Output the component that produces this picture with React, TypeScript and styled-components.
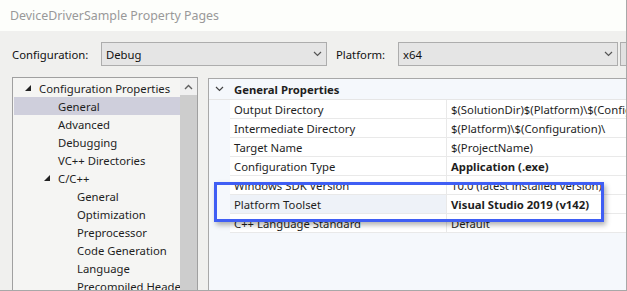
import styled, { createGlobalStyle } from "styled-components";

const GlobalStyle = createGlobalStyle`
  html, body {
    margin: 0;
    padding: 0;
    background: #f0f0ee;
  }
  body {
    font-family: "Noto Sans", "Open Sans", sans-serif;
    font-size: 11.3px;
    color: #1e1e1e;
  }
`;

const Window = styled.div`
  position: relative;
  width: 626px;
  height: 290px;
  border-right: 1px solid #a8a8a8;
  border-bottom: 1px solid #a8a8a8;
  background: #f0f0ee;
  overflow: hidden;
  display: flex;
  flex-direction: column;
`;

const TitleBar = styled.div`
  height: 31px;
  flex-shrink: 0;
  background: #fdfefb;
  color: #999;
  font-size: 12.4px;
  display: flex;
  align-items: center;
  padding-left: 10px;
`;

const Body = styled.div`
  flex: 1;
  padding: 11px 0 0 12px;
  display: flex;
  flex-direction: column;
  min-height: 0;
`;

const ConfigRow = styled.div`
  display: flex;
  align-items: center;
  height: 24px;
`;

const Label = styled.span<{ $w: number; $indent?: number }>`
  width: ${(p) => p.$w}px;
  padding-left: ${(p) => p.$indent ?? 0}px;
  box-sizing: border-box;
  flex-shrink: 0;
  color: #111;
`;

const Combo = styled.div<{ $w: number }>`
  width: ${(p) => p.$w}px;
  height: 24px;
  box-sizing: border-box;
  flex-shrink: 0;
  background: #e5e5e5;
  border: 1px solid #adadad;
  display: flex;
  align-items: center;
  justify-content: space-between;
  padding: 0 4px 0 4px;
  color: #111;
`;

const StubButton = styled.div`
  width: 20px;
  height: 24px;
  box-sizing: border-box;
  margin-left: 2px;
  background: #e1e1e1;
  border: 1px solid #adadad;
  flex-shrink: 0;
`;

const Panels = styled.div`
  display: flex;
  flex: 1;
  margin-top: 11px;
  min-height: 0;
`;

const TreePanel = styled.div`
  width: 186px;
  flex-shrink: 0;
  box-sizing: border-box;
  border: 1px solid #a0a0a0;
  border-bottom: none;
  background: #f5f5f3;
  display: flex;
  overflow: hidden;
`;

const TreeList = styled.div`
  flex: 1;
  min-width: 0;
  overflow: hidden;
  padding: 1px 0 0 1px;
`;

const TreeRow = styled.div<{ $level: number; $selected?: boolean }>`
  height: 18px;
  display: flex;
  align-items: center;
  white-space: nowrap;
  overflow: hidden;
  padding-left: ${(p) => 11 + (p.$level - 1) * 19}px;
  background: ${(p) => (p.$selected ? "#cfcfdc" : "transparent")};
`;

const Expander = styled.span`
  width: 14px;
  flex-shrink: 0;
  display: flex;
  align-items: center;
`;

const Scrollbar = styled.div`
  width: 17px;
  flex-shrink: 0;
  display: flex;
  flex-direction: column;
  background: #f0f0f0;
`;

const ScrollArrow = styled.div`
  height: 17px;
  display: flex;
  align-items: center;
  justify-content: center;
  background: #f0f0f0;
`;

const ScrollThumb = styled.div`
  flex: 1;
  background: #cdcdcd;
`;

const GridPanel = styled.div`
  margin-left: 10px;
  margin-top: 1px;
  flex: 1;
  border: 1px solid #a8a8a8;
  border-bottom: none;
  border-right: none;
  background: #f5f8fc;
  overflow: hidden;
`;

const GroupHeader = styled.div`
  height: 20px;
  display: flex;
  align-items: center;
  font-weight: 700;
  border-bottom: 1px solid #e6e6e6;
`;

const GroupChevron = styled.span`
  width: 25px;
  padding-left: 6px;
  box-sizing: border-box;
  display: flex;
  align-items: center;
`;

const PropRow = styled.div`
  height: 19px;
  display: flex;
  margin-left: 21px;
  box-sizing: border-box;
  border-bottom: 1px solid #e9e9e9;
`;

const NameCell = styled.div<{ $selected?: boolean }>`
  width: 217px;
  flex-shrink: 0;
  box-sizing: border-box;
  padding-left: 4px;
  display: flex;
  align-items: center;
  white-space: nowrap;
  overflow: hidden;
  border-right: 1px solid #e9e9e9;
  background: ${(p) => (p.$selected ? "#eef2f8" : "#ffffff")};
`;

const ValueCell = styled.div<{ $bold?: boolean }>`
  flex: 1;
  padding-left: 4px;
  display: flex;
  align-items: center;
  white-space: nowrap;
  overflow: hidden;
  background: #ffffff;
  font-weight: ${(p) => (p.$bold ? 700 : 400)};
`;

const Highlight = styled.div`
  position: absolute;
  left: 214px;
  top: 182px;
  width: 390px;
  height: 40px;
  box-sizing: border-box;
  border: 3px solid #3f5ef4;
  box-shadow: 2px 3px 5px rgba(0, 0, 0, 0.3);
  pointer-events: none;
`;

const Chevron = ({ color = "#555" }: { color?: string }) => (
  <svg width="9" height="6" viewBox="0 0 9 6">
    <path d="M1 1 L4.5 4.5 L8 1" fill="none" stroke={color} strokeWidth="1.2" />
  </svg>
);

const UpChevron = () => (
  <svg width="9" height="6" viewBox="0 0 9 6">
    <path d="M1 5 L4.5 1.5 L8 5" fill="none" stroke="#606060" strokeWidth="1.4" />
  </svg>
);

const Triangle = () => (
  <svg width="6" height="6" viewBox="0 0 6 6">
    <path d="M6 0 L6 6 L0 6 Z" fill="#222" />
  </svg>
);

const tree = [
  { label: "Configuration Properties", level: 1, expanded: true },
  { label: "General", level: 2, selected: true },
  { label: "Advanced", level: 2 },
  { label: "Debugging", level: 2 },
  { label: "VC++ Directories", level: 2 },
  { label: "C/C++", level: 2, expanded: true },
  { label: "General", level: 3 },
  { label: "Optimization", level: 3 },
  { label: "Preprocessor", level: 3 },
  { label: "Code Generation", level: 3 },
  { label: "Language", level: 3 },
  { label: "Precompiled Headers", level: 3 },
];

const props = [
  { name: "Output Directory", value: "$(SolutionDir)$(Platform)\\$(Configuration)\\" },
  { name: "Intermediate Directory", value: "$(Platform)\\$(Configuration)\\" },
  { name: "Target Name", value: "$(ProjectName)" },
  { name: "Configuration Type", value: "Application (.exe)", bold: true },
  { name: "Windows SDK Version", value: "10.0 (latest installed version)" },
  { name: "Platform Toolset", value: "Visual Studio 2019 (v142)", bold: true, selected: true },
  { name: "C++ Language Standard", value: "Default" },
];

export default function App() {
  return (
    <>
      <GlobalStyle />
      <Window>
        <TitleBar>DeviceDriverSample Property Pages</TitleBar>
        <Body>
          <ConfigRow>
            <Label $w={89}>Configuration:</Label>
            <Combo $w={226}>
              <span>Debug</span>
              <Chevron />
            </Combo>
            <Label $w={71} $indent={9}>Platform:</Label>
            <Combo $w={220}>
              <span>x64</span>
              <Chevron />
            </Combo>
            <StubButton />
          </ConfigRow>
          <Panels>
            <TreePanel>
              <TreeList>
                {tree.map((t, i) => (
                  <TreeRow key={i} $level={t.level} $selected={t.selected}>
                    <Expander>{t.expanded && <Triangle />}</Expander>
                    {t.label}
                  </TreeRow>
                ))}
              </TreeList>
              <Scrollbar>
                <ScrollArrow>
                  <UpChevron />
                </ScrollArrow>
                <ScrollThumb />
              </Scrollbar>
            </TreePanel>
            <GridPanel>
              <GroupHeader>
                <GroupChevron>
                  <Chevron color="#444" />
                </GroupChevron>
                General Properties
              </GroupHeader>
              {props.map((p) => (
                <PropRow key={p.name}>
                  <NameCell $selected={p.selected}>{p.name}</NameCell>
                  <ValueCell $bold={p.bold}>{p.value}</ValueCell>
                </PropRow>
              ))}
            </GridPanel>
          </Panels>
        </Body>
        <Highlight />
      </Window>
    </>
  );
}
